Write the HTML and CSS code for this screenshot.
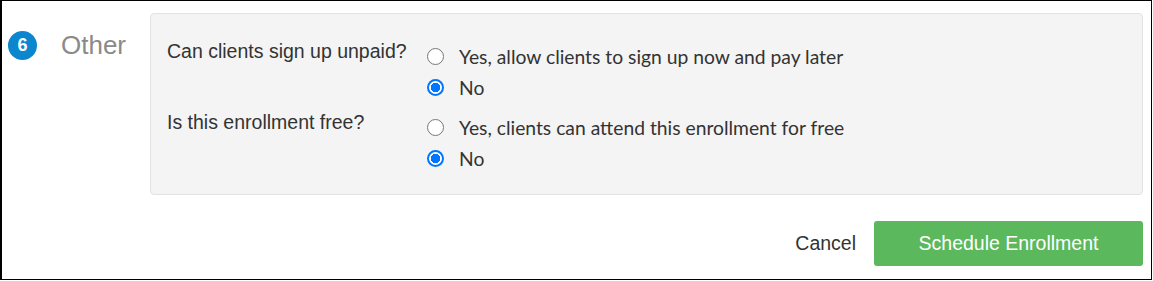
FILE: index.html
```html
<!DOCTYPE html>
<html lang="en">
<head>
    <meta charset="UTF-8">
    <meta name="viewport" content="width=device-width, initial-scale=1.0">
    <title>Schedule Enrollment</title>
    <link rel="stylesheet" href="styles.css">
</head>
<body>
    <div class="frame">
        <div class="section">
            <div class="section-head">
                <span class="step">6</span>
                <span class="section-title">Other</span>
            </div>
            <div class="panel">
                <div class="field">
                    <div class="field-label">Can clients sign up unpaid?</div>
                    <div class="options">
                        <label class="option"><input type="radio" name="unpaid"> Yes, allow clients to sign up now and pay later</label>
                        <label class="option"><input type="radio" name="unpaid" checked> No</label>
                    </div>
                </div>
                <div class="field">
                    <div class="field-label">Is this enrollment free?</div>
                    <div class="options">
                        <label class="option"><input type="radio" name="free"> Yes, clients can attend this enrollment for free</label>
                        <label class="option"><input type="radio" name="free" checked> No</label>
                    </div>
                </div>
            </div>
        </div>
        <div class="actions">
            <a class="cancel" href="#">Cancel</a>
            <button class="btn-submit" type="button">Schedule Enrollment</button>
        </div>
    </div>
</body>
</html>
```

FILE: styles.css
```css
body{
    margin: 0;
    font-family: "Liberation Sans", Arial, sans-serif;
    color: #333;
}
.frame{
    width: 1152px;
    height: 280px;
    box-sizing: border-box;
    border: 1px solid #000;
    border-left-width: 2px;
    padding-top: 12px;
}
.section{
    display: flex;
}
.section-head{
    width: 148px;
    padding: 18px 0 0 6px;
    box-sizing: border-box;
    display: flex;
    align-items: center;
    align-self: flex-start;
}
.step{
    width: 29px;
    height: 29px;
    border-radius: 50%;
    background: #0b86cf;
    color: #fff;
    font-weight: bold;
    font-size: 18px;
    line-height: 29px;
    text-align: center;
}
.section-title{
    margin-left: 24px;
    font-size: 26px;
    color: #8a8a8a;
    line-height: 29px;
}
.panel{
    flex: 1;
    margin-right: 8px;
    background: #f4f4f4;
    border: 1px solid #e3e3e3;
    border-radius: 4px;
    padding: 27px 0 20px 16px;
}
.field{
    display: flex;
}
.field + .field{
    margin-top: 9px;
}
.field-label{
    width: 260px;
    font-size: 19.5px;
    line-height: 20px;
}
.options{
    display: flex;
    flex-direction: column;
    font-family: Lato, "Liberation Sans", sans-serif;
    font-size: 19.3px;
    color: #333;
}
.option{
    display: flex;
    align-items: center;
    height: 31px;
}
.option input{
    appearance: none;
    -webkit-appearance: none;
    width: 17px;
    height: 17px;
    margin: 0 15px 0 0;
    border: 1.5px solid #767676;
    border-radius: 50%;
    background: #fff;
    box-sizing: border-box;
}
.option input:checked{
    border: 2px solid #0075ff;
    background: radial-gradient(circle, #0075ff 0 4.5px, #fff 5px);
}
.actions{
    display: flex;
    justify-content: flex-end;
    align-items: center;
    margin-top: 26px;
    padding-right: 8px;
}
.cancel{
    color: #333;
    text-decoration: none;
    font-size: 19.5px;
    margin-right: 18px;
}
.btn-submit{
    width: 269px;
    height: 45px;
    border: none;
    border-radius: 3px;
    background: #5cb85c;
    color: #fff;
    font-family: "Liberation Sans", Arial, sans-serif;
    font-size: 19.5px;
}
```
